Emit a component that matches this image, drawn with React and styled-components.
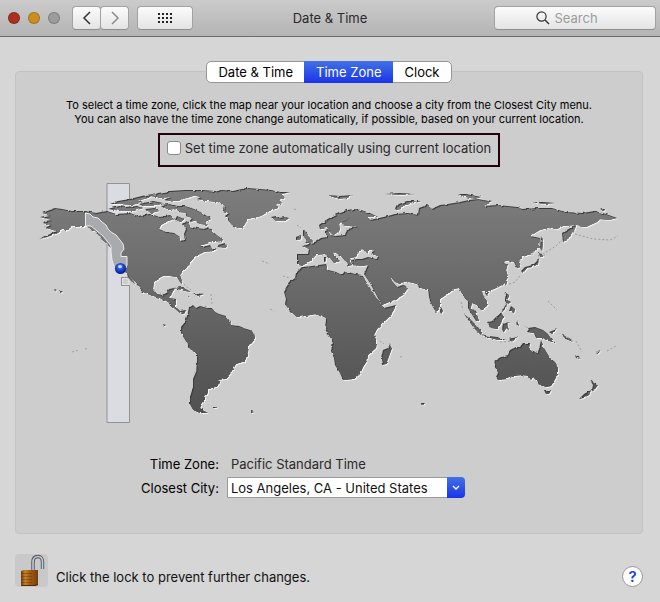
import React, { useState } from 'react'
import styled, { createGlobalStyle, css } from 'styled-components'


const CITIES = [
    'Los Angeles, CA - United States',
    'San Francisco, CA - United States',
    'Seattle, WA - United States',
    'Vancouver - Canada',
]

const LAND = [
    // north america
    'M50 210L56 208L62 209L72 211L85 211L96 213L107 211L116 214L130 213L138 216L150 214L160 217L170 215L175 219L168 221L161 225L159 229L166 232L174 233L180 237L181 241L185 240L184 234L186 229L183 224L187 221L190 226L196 228L204 229L209 227L213 232L218 236L222 239L221 241L212 242L206 244L198 246L203 247L210 245L212 249L218 248L213 251L204 252L198 255L193 259L190 262L189 266L183 271L180 275L182 281L182 284L180 282L177 277L170 276L163 276L157 279L154 282L153 289L157 294L162 295L167 292L169 289L175 288L172 293L170 298L176 299L176 307L180 311L186 310L184 314L180 313L174 308L168 303L160 298L150 295L143 292L139 287L134 281L130 275L126 272L118 272L113 263L111 254L111 248L105 242L101 239L98 234L92 230L88 227L79 227L71 227L67 230L62 230L55 234L47 237L39 239L48 235L56 231L50 229L44 228L51 225L43 223L45 221L52 220L40 217L50 215L42 213Z',
    'M127 272L131 277L135 284L131 281L128 277ZM218 245L225 243L226 248L219 247Z',
    // south america
    'M189 308L193 305L196 308L200 306L207 308L212 308L215 312L219 314L226 316L229 320L231 325L238 326L243 328L250 330L254 333L255 338L249 345L248 352L245 361L236 364L233 369L230 374L225 379L218 380L220 383L215 387L208 389L208 393L204 396L205 400L202 404L200 408L204 411L208 413L200 413L193 410L190 404L190 397L193 387L193 379L196 372L197 362L197 353L190 349L187 343L184 338L181 333L181 327L185 322L187 316Z',
    'M213 407L218 406L217 408L213 408ZM251 411L254 412L251 413Z',
    // greenland, iceland
    'M191 195L199 193L204 191L214 192L222 190L233 191L246 188L260 189L271 190L280 192L290 192L282 194L284 197L279 200L282 203L276 205L278 208L272 210L266 213L261 216L253 218L247 219L245 224L242 228L238 228L232 225L228 220L225 216L229 213L223 211L224 206L218 202L208 201L197 199L201 197Z',
    'M271 217L276 216L279 218L285 217L289 218L285 221L276 221Z',
    // arctic islands
    'M151 196L158 193L170 191L185 190L203 190L214 191L199 194L190 197L183 199L176 202L164 200L170 197L160 198Z',
    'M110 204L118 201L130 199L146 195L154 194L148 198L136 201L143 202L132 205L120 204Z',
    'M108 209L118 206L126 207L137 206L142 208L134 211L121 211ZM139 204L153 201L163 203L156 206L143 206ZM145 209L155 208L159 211L151 213Z',
    'M161 205L169 204L178 206L185 206L194 209L202 213L207 216L211 219L205 222L208 225L200 224L194 221L189 222L192 218L186 216L187 213L179 212L174 209L168 210ZM177 216L184 219L181 222L175 220Z',
    // europe, asia
    'M297 254L308 254L309 249L303 246L310 243L315 242L321 238L327 237L325 231L328 230L330 235L336 236L345 235L347 229L358 227L349 226L341 225L342 221L350 218L343 220L339 224L340 229L338 233L333 235L329 231L327 228L320 229L319 225L326 220L333 216L340 212L347 210L354 209L361 210L370 213L378 217L368 217L370 220L379 218L388 216L395 214L408 213L418 215L419 208L427 205L432 209L440 205L448 204L460 202L469 200L478 199L492 202L483 206L498 205L517 207L522 209L538 208L552 208L565 212L582 213L595 211L606 214L617 218L609 220L600 219L597 222L586 227L576 226L573 233L569 238L563 242L562 233L575 225L564 226L558 229L548 228L540 230L530 236L540 238L539 246L532 254L522 257L519 261L521 267L517 268L514 262L508 260L502 262L508 265L506 270L508 277L504 284L494 289L488 291L482 291L483 296L487 301L487 306L481 310L477 305L472 303L471 307L476 312L479 321L476 321L471 313L468 308L468 301L464 297L459 288L454 289L449 293L440 299L440 307L437 312L434 309L430 301L428 290L421 288L417 284L409 282L400 284L395 282L390 276L392 281L397 287L404 285L408 288L403 295L394 300L382 305L378 298L370 283L364 274L368 265L362 266L353 265L352 260L357 259L362 259L368 257L377 259L378 256L372 254L374 250L368 251L367 254L363 249L358 252L356 257L350 258L352 265L348 266L346 262L341 256L333 251L334 256L340 261L334 263L331 259L325 254L316 255L310 261L302 266L297 264Z',
    'M303 230L307 231L306 234L310 238L313 241L310 243L304 243L307 240L303 236ZM296 237L301 235L301 239L296 241ZM324 257L326 257L326 261L324 262Z',
    'M328 195L340 196L353 195L347 198L339 199L333 197ZM385 194L400 193L415 194L401 195ZM395 208L399 204L407 201L422 201L413 203L403 206L401 209L396 210ZM458 194L466 194L481 197L475 199L466 197ZM532 202L543 202L555 203L545 204ZM600 209L605 209L604 211Z',
    // africa
    'M302 267L312 266L326 264L328 270L336 272L342 275L345 271L355 274L363 275L365 280L370 288L375 296L380 303L384 308L396 305L392 314L384 322L377 329L374 335L377 342L376 348L368 355L367 361L363 367L360 374L354 379L343 380L340 373L335 365L334 358L331 351L333 342L328 334L325 329L326 319L322 317L316 314L305 316L297 317L290 311L285 304L286 299L284 292L290 282L295 278L296 273Z',
    'M390 344L392 348L388 359L386 364L382 365L381 359L383 350L388 348ZM441 307L443 311L441 314L440 310Z',
    // japan, philippines, indonesia
    'M541 237L543 243L542 251L540 248ZM539 253L545 255L540 257ZM539 258L538 264L533 267L527 268L523 273L521 271L525 267L533 265L537 261ZM506 279L507 283L505 286ZM485 292L489 292L487 295Z',
    'M506 293L509 295L507 300L511 302L508 304L505 299ZM511 306L515 309L514 313L509 311ZM505 306L507 303L506 308L501 313Z',
    'M487 322L492 321L497 316L501 313L503 317L501 323L498 329L491 328ZM464 314L470 319L477 326L482 332L481 335L474 328ZM481 334L489 336L497 337L506 340L498 340L487 337ZM503 324L510 322L507 325L509 330L506 328L504 333L502 329ZM509 339L517 337L513 341ZM517 321L519 326L516 324Z',
    'M523 325L528 328L535 327L543 330L548 334L552 340L556 343L549 341L543 338L536 338L534 333L527 332L529 329ZM549 332L557 329L552 334ZM559 332L568 338L573 342L566 339Z',
    // australia, new zealand
    'M494 361L501 357L508 355L510 350L516 347L520 347L523 343L530 343L529 348L534 352L538 353L540 345L541 340L544 348L547 353L550 358L555 362L558 367L558 374L554 381L551 386L546 387L538 384L536 380L533 377L531 380L528 376L522 375L514 376L507 379L498 380L496 377L498 373Z',
    'M544 390L551 390L549 394L546 394ZM590 380L594 383L598 385L595 389L592 390L593 385ZM591 390L589 395L583 398L579 399L584 394ZM575 355L580 359L576 358ZM596 352L600 350L598 353Z',
    // caribbean, hawaii, kerguelen
    'M174 288L182 287L191 292L185 291ZM193 293L204 294L198 296ZM187 296L190 297L187 297ZM54 289L57 290L55 291ZM59 290L62 292L60 293ZM421 403L425 403L423 405ZM163 324L166 325L164 326Z',
]

const COAST_BITS = 'M94 229L97 234M98 232L103 240M181 281L186 286L191 290M211 294L212 304M270 309L274 311M262 261L270 264M283 276L290 278M400 357L403 356M380 341L384 344M566 236L556 246L543 254M575 234L593 239L610 240L618 236M520 276L515 282L507 285M576 341L582 352M548 301L557 310M607 351L616 346M72 352L79 350M85 349L88 348M297 225L301 228M294 209L298 210M500 342L513 341M461 302L463 310'

function WorldMap() {
    return (
        <Map viewBox="16 175 626 255" role="img" aria-label="World map, Pacific time zone selected">
            <defs>
                <linearGradient id="land" gradientUnits="userSpaceOnUse" x1="0" y1="188" x2="0" y2="414">
                    <stop offset="0" stopColor="#7d7d7d" />
                    <stop offset="1" stopColor="#505050" />
                </linearGradient>
                <radialGradient id="pin" cx="0.45" cy="0.35" r="0.6">
                    <stop offset="0" stopColor="#5d8cf5" />
                    <stop offset="0.5" stopColor="#1f49d6" />
                    <stop offset="1" stopColor="#0a1f86" />
                </radialGradient>
                {/* ragged coast, dark upper edge, white lower edge */}
                <filter id="engrave" filterUnits="userSpaceOnUse" x="16" y="175" width="626" height="255" colorInterpolationFilters="sRGB">
                    <feTurbulence type="fractalNoise" baseFrequency="0.2" numOctaves="2" seed="4" result="noise" />
                    <feDisplacementMap in="SourceGraphic" in2="noise" scale="3" xChannelSelector="R" yChannelSelector="G" result="shape" />
                    <feOffset in="shape" dx="1" dy="1" result="moved" />
                    <feComposite in="moved" in2="shape" operator="in" result="face" />
                    <feFlood floodColor="#3c3c3c" />
                    <feComposite in2="shape" operator="in" result="dark" />
                    <feFlood floodColor="#f4f4f4" />
                    <feComposite in2="moved" operator="in" result="light" />
                    <feMerge>
                        <feMergeNode in="light" />
                        <feMergeNode in="dark" />
                        <feMergeNode in="face" />
                    </feMerge>
                </filter>
            </defs>
            <path d="M107 183.500H129.500V277.500H121.500V285.500H129.500V422.500H107Z" fill="#dbdce1" stroke="#929292" />
            <g filter="url(#engrave)">
                <path d={LAND.join('')} fill="url(#land)" />
            </g>
            <path d={COAST_BITS} fill="none" stroke="#8a8a8a" strokeWidth="0.7" strokeDasharray="2 2" />
            <path d="M129.500 285.500H121.500V277.500H127" fill="none" stroke="#8e8e8e" />
            <path d="M122.500 284.500V278.500H127L129 281V284.500Z" fill="#cdcdcd" stroke="#e6e6e6" />
            <path
                d="M85.500 213L90 214L93 217L98 218L102 222L106 225L108 229L111 232L116 235L120 240L123 244L124 249L121 253L121 256.500H127V265L124 272H118L114 266L112 260L111 252L111 246L107 241L103 236L97 231L91 226L85.500 226Z"
                fill="#a9aaad"
                stroke="#ececec"
            />
            <circle cx="120.500" cy="268.500" r="5.600" fill="url(#pin)" />
            <ellipse cx="120" cy="266.500" rx="2" ry="1.600" fill="#dbe7ff" opacity="0.9" />
        </Map>
    )
}

function Lock() {
    return (
        <svg width="33" height="33" viewBox="0 0 33 33" aria-hidden="true">
            <defs>
                <linearGradient id="brass" x1="0" x2="1">
                    <stop offset="0" stopColor="#6b3d0c" />
                    <stop offset="0.25" stopColor="#c98226" />
                    <stop offset="0.5" stopColor="#a05c16" />
                    <stop offset="0.8" stopColor="#8a4d12" />
                    <stop offset="1" stopColor="#6f3e10" />
                </linearGradient>
            </defs>
            <path d="M18 16.500V8C18 4.500 20 2.500 23 2.500C26 2.500 27.500 5 27.500 8V15" fill="none" stroke="#4e555c" strokeWidth="3.400" />
            <path d="M18 16.500V8C18 4.500 20 2.500 23 2.500C26 2.500 27.500 5 27.500 8V15" fill="none" stroke="#c3cbd3" strokeWidth="1.600" />
            <path d="M6 17L9 16H23V31L20 32H6Z" fill="url(#brass)" />
            <path d="M6 19.500H17M6 22.500H17M6 25.500H17M6 28.500H17" stroke="#4d2905" strokeWidth="0.600" opacity="0.6" />
            <path d="M6 31.500H20L23 30.500" fill="none" stroke="#4d2905" />
        </svg>
    )
}

function App() {
    const [tab, setTab] = useState('Time Zone');
    const [auto, setAuto] = useState(false);
    const [city, setCity] = useState(CITIES[0]);

    return (
        <Window>
            <GlobalStyle />
            <TitleBar>
                <Controls>
                    <Lights>
                        <Light $color="#ac3022" aria-label="Close" />
                        <Light $color="#cc8e1e" aria-label="Minimize" />
                        <Light $color="#9c9c9c" aria-label="Zoom" />
                    </Lights>
                    <History>
                        <BarButton aria-label="Back">
                            <svg width="10" height="14" viewBox="0 0 10 14"><path d="M8 1L2 7L8 13" fill="none" stroke="#333" strokeWidth="1.500" /></svg>
                        </BarButton>
                        <BarButton aria-label="Forward">
                            <svg width="10" height="14" viewBox="0 0 10 14"><path d="M2 1L8 7L2 13" fill="none" stroke="#8c8c8c" strokeWidth="1.500" /></svg>
                        </BarButton>
                    </History>
                    <BarButton $wide aria-label="Show all">
                        <svg width="14" height="10" viewBox="0 0 14 10">
                            <path d="M0 1H14M0 5H14M0 9H14" stroke="#222" strokeWidth="2" strokeDasharray="2 2" />
                        </svg>
                    </BarButton>
                </Controls>
                <Title>Date &amp; Time</Title>
                <Search>
                    <svg width="14" height="14" viewBox="0 0 14 14" aria-hidden="true">
                        <circle cx="5.500" cy="5.500" r="4.600" fill="none" stroke="#333" strokeWidth="1.200" />
                        <path d="M9 9L13 13" stroke="#333" strokeWidth="1.400" />
                    </svg>
                    <input type="search" placeholder="Search" aria-label="Search" />
                </Search>
            </TitleBar>
            <Content>
                <Panel>
                    <Tabs role="tablist">
                        {['Date & Time', 'Time Zone', 'Clock'].map((name) => (
                            <Tab key={name} role="tab" aria-selected={tab === name} $active={tab === name} onClick={() => setTab(name)}>
                                {name}
                            </Tab>
                        ))}
                    </Tabs>
                    <Hint>
                        To select a time zone, click the map near your location and choose a city from the Closest City menu.
                        <br />
                        You can also have the time zone change automatically, if possible, based on your current location.
                    </Hint>
                    <AutoZone>
                        <input type="checkbox" checked={auto} onChange={() => setAuto(!auto)} />
                        Set time zone automatically using current location
                    </AutoZone>
                    <WorldMap />
                    <Fields>
                        <Label as="span">Time Zone:</Label>
                        <Value>Pacific Standard Time</Value>
                        <Label htmlFor="city">Closest City:</Label>
                        <Combo>
                            <select id="city" value={city} onChange={(e) => setCity(e.target.value)}>
                                {CITIES.map((name) => <option key={name}>{name}</option>)}
                            </select>
                            <Arrow>
                                <svg width="8" height="6" viewBox="0 0 8 6"><path d="M1 1L4 4L7 1" fill="none" stroke="#fff" strokeWidth="1.400" /></svg>
                            </Arrow>
                        </Combo>
                    </Fields>
                </Panel>
                <Footer>
                    <LockButton aria-label="Lock"><Lock /></LockButton>
                    <LockText>Click the lock to prevent further changes.</LockText>
                    <Help aria-label="Help">?</Help>
                </Footer>
            </Content>
        </Window>
    )
}

export default App

const GlobalStyle = createGlobalStyle`
    *{
        box-sizing: border-box;
    }
    body{
        margin: 0;
        background: #d6d6d6;
        color: #111;
        font: 13px/16px Inter, "Liberation Sans", sans-serif;
    }
    button, input, select{
        font: inherit;
        color: inherit;
        margin: 0;
    }
`

const Window = styled.div`
    min-height: 100vh;
    background: #d6d6d6;
`

const TitleBar = styled.header`
    display: grid;
    grid-template-columns: 1fr auto 1fr;
    align-items: center;
    height: 37px;
    padding: 0 4px;
    background: linear-gradient(#cbcbcb, #b4b4b4);
    border-bottom: 1px solid #6c6c6c;
`

const Controls = styled.div`
    display: flex;
    align-items: center;
    padding-left: 4px;
`

const Lights = styled.div`
    display: flex;
    gap: 8px;
    margin-right: 12px;
`

const Light = styled.button`
    width: 12px;
    height: 12px;
    padding: 0;
    border: 1px solid rgba(0, 0, 0, 0.2);
    border-radius: 50%;
    background: ${(props) => props.$color};
`

const History = styled.div`
    display: flex;
    margin-right: 8px;
`

const raised = css`
    border: 1px solid #a2a2a2;
    border-bottom-color: #8e8e8e;
    border-radius: 4px;
    background: linear-gradient(#fbfbfb, #e4e4e4);
`

const BarButton = styled.button`
    ${raised}
    display: flex;
    align-items: center;
    justify-content: center;
    width: ${(props) => (props.$wide ? '56px' : '29px')};
    height: 24px;
    padding: 0;
    & + &{
        margin-left: -1px;
    }
`

const Title = styled.h1`
    margin: 0;
    font-size: 13px;
    font-weight: 400;
    line-height: 16px;
    color: #2a2a2a;
`

const Search = styled.label`
    ${raised}
    display: flex;
    align-items: center;
    justify-content: center;
    gap: 5px;
    justify-self: end;
    width: 162px;
    height: 24px;
    input{
        width: 60px;
        padding: 0;
        border: none;
        outline: none;
        background: none;
    }
    input::placeholder{
        color: #9b9b9b;
    }
`

const Content = styled.main`
    padding: 34px 17px 14px 15px;
`

const Panel = styled.section`
    display: flex;
    flex-direction: column;
    align-items: center;
    padding-bottom: 35px;
    background: #cdcdcd;
    border: 1px solid #c3c3c3;
    border-radius: 4px;
`

const Tabs = styled.div`
    display: flex;
    height: 22px;
    margin-top: -11px;
    border: 1px solid #969696;
    border-radius: 5px;
    background: #fff;
`

const Tab = styled.button`
    padding: 0 11px 1px;
    border: none;
    border-radius: 4px;
    background: none;
    color: #000;
    ${(props) => props.$active && css`
        margin: -1px 0;
        padding: 0 12px 1px;
        border-radius: 0;
        background: linear-gradient(#4272e4, #1a34e8);
        color: #fff;
    `}
`

const Hint = styled.p`
    margin: 15px 0 7px;
    font-size: 11px;
    line-height: 14px;
    text-align: center;
    color: #000;
`

const AutoZone = styled.label`
    display: flex;
    align-items: center;
    gap: 4px;
    height: 34px;
    padding: 0 7px 4px;
    border: 2px solid #22000d;
    color: #2a2a2a;
    input{
        appearance: none;
        width: 14px;
        height: 14px;
        border: 1px solid #8a8a8a;
        border-radius: 3px;
        background: #fff;
    }
    input:checked{
        background: #1f49e6;
    }
`

const Map = styled.svg`
    display: block;
    width: 100%;
    margin-top: 8px;
`

const Fields = styled.div`
    display: grid;
    grid-template-columns: auto 238px;
    align-items: center;
    gap: 5px 8px;
    margin-top: 26px;
    margin-right: 52px;
`

const Label = styled.label`
    text-align: right;
    color: #000;
`

const Value = styled.span`
    padding-left: 4px;
    color: #2a2a2a;
`

const Combo = styled.div`
    display: grid;
    select{
        grid-area: 1 / 1;
        appearance: none;
        height: 21px;
        padding: 0 22px 0 3px;
        border: 1px solid #9a9a9a;
        border-radius: 0 5px 5px 0;
        background: #fff;
    }
`

const Arrow = styled.span`
    grid-area: 1 / 1;
    justify-self: end;
    display: flex;
    align-items: center;
    justify-content: center;
    width: 18px;
    border-radius: 0 4px 4px 0;
    background: linear-gradient(#4272e4, #1a34e8);
    pointer-events: none;
`

const Footer = styled.footer`
    display: flex;
    align-items: center;
    gap: 8px;
    margin-top: 20px;
`

const LockButton = styled.button`
    width: 33px;
    height: 33px;
    padding: 0;
    border: none;
    border-radius: 4px;
    background: #c9c9c9;
`

const LockText = styled.span`
    flex: 1;
    padding-top: 12px;
`

const Help = styled.button`
    width: 21px;
    height: 21px;
    margin-top: 12px;
    padding: 0;
    border: 1px solid #989898;
    border-radius: 50%;
    background: #fff;
    color: #1c3fe0;
    font-size: 15px;
    font-weight: 600;
    line-height: 16px;
`
